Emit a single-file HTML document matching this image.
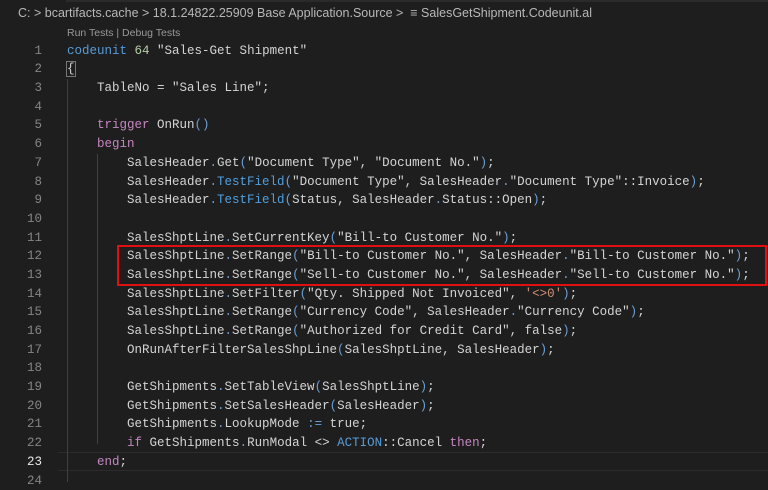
<!DOCTYPE html>
<html><head><meta charset="utf-8"><style>
html,body{margin:0;padding:0;background:#1e1e1e;width:768px;height:482px;overflow:hidden}
.bc{position:absolute;left:18px;top:6px;font:12.5px "Liberation Sans",sans-serif;color:#b8b8b8;white-space:pre}
.topline{position:absolute;left:66px;top:0;width:702px;height:2px;background:#2a2a2a}
.lens{position:absolute;left:67px;top:27px;font:10.5px "Liberation Sans",sans-serif;color:#999}
.nums{position:absolute;left:0;top:41.7px;width:42px;text-align:right;font:12.5px/18.68px "Liberation Mono",monospace;color:#858585;white-space:pre}
.code{position:absolute;left:67px;top:41.7px;font:12.5px/18.68px "Liberation Mono",monospace;color:#d4d4d4;white-space:pre;margin:0}
.k{color:#569cd6}.p{color:#c586c0}.n{color:#b5cea8}.f{color:#4f9fe0}.d{color:#6a9fd6}.s{color:#ce9178}
.g{position:absolute;width:1px;background:#404040}
.cur{position:absolute;left:58px;top:452px;width:710px;height:17px;border-top:1px solid #2c2c2c;border-bottom:1px solid #2c2c2c}
.box{position:absolute;left:117px;top:245px;width:646px;height:37px;border:2px solid #e01010}
</style></head><body>
<div class="topline"></div>
<div class="bc">C: &gt; bcartifacts.cache &gt; 18.1.24822.25909 Base Application.Source &gt;  <span style="color:#b8b8b8">&#8801;</span> SalesGetShipment.Codeunit.al</div>
<div class="lens">Run Tests | Debug Tests</div>
<div class="cur"></div>
<div class="g" style="left:67px;top:79px;height:403px"></div>
<div class="g" style="left:97px;top:154px;height:290px"></div>
<div class="nums">1
2
3
4
5
6
7
8
9
10
11
12
13
14
15
16
17
18
19
20
21
22
<span style="color:#e8e8e8">23</span>
24</div>
<pre class="code"><span class="k">codeunit</span> <span class="n">64</span> "Sales-Get Shipment"
<span style="outline:1px solid #777">{</span>
    TableNo = "Sales Line";

    <span class="p">trigger</span> OnRun<span class="d">()</span>
    <span class="p">begin</span>
        SalesHeader<span class="d">.</span>Get<span class="d">(</span>"Document Type", "Document No."<span class="d">)</span>;
        SalesHeader<span class="d">.</span><span class="f">TestField</span><span class="d">(</span>"Document Type", SalesHeader<span class="d">.</span>"Document Type"::Invoice<span class="d">)</span>;
        SalesHeader<span class="d">.</span><span class="f">TestField</span><span class="d">(</span>Status, SalesHeader<span class="d">.</span>Status::Open<span class="d">)</span>;

        SalesShptLine<span class="d">.</span>SetCurrentKey<span class="d">(</span>"Bill-to Customer No."<span class="d">)</span>;
        SalesShptLine<span class="d">.</span>SetRange<span class="d">(</span>"Bill-to Customer No.", SalesHeader<span class="d">.</span>"Bill-to Customer No."<span class="d">)</span>;
        SalesShptLine<span class="d">.</span>SetRange<span class="d">(</span>"Sell-to Customer No.", SalesHeader<span class="d">.</span>"Sell-to Customer No."<span class="d">)</span>;
        SalesShptLine<span class="d">.</span>SetFilter<span class="d">(</span>"Qty. Shipped Not Invoiced", <span class="s">'&lt;&gt;0'</span><span class="d">)</span>;
        SalesShptLine<span class="d">.</span>SetRange<span class="d">(</span>"Currency Code", SalesHeader<span class="d">.</span>"Currency Code"<span class="d">)</span>;
        SalesShptLine<span class="d">.</span>SetRange<span class="d">(</span>"Authorized for Credit Card", false<span class="d">)</span>;
        OnRunAfterFilterSalesShpLine<span class="d">(</span>SalesShptLine, SalesHeader<span class="d">)</span>;

        GetShipments<span class="d">.</span>SetTableView<span class="d">(</span>SalesShptLine<span class="d">)</span>;
        GetShipments<span class="d">.</span>SetSalesHeader<span class="d">(</span>SalesHeader<span class="d">)</span>;
        GetShipments<span class="d">.</span>LookupMode <span class="d">:=</span> true;
        <span class="p">if</span> GetShipments<span class="d">.</span>RunModal &lt;&gt; <span class="k">ACTION</span>::Cancel <span class="p">then</span>;
    <span class="p">end</span>;
</pre>
<div class="box"></div>
</body></html>
